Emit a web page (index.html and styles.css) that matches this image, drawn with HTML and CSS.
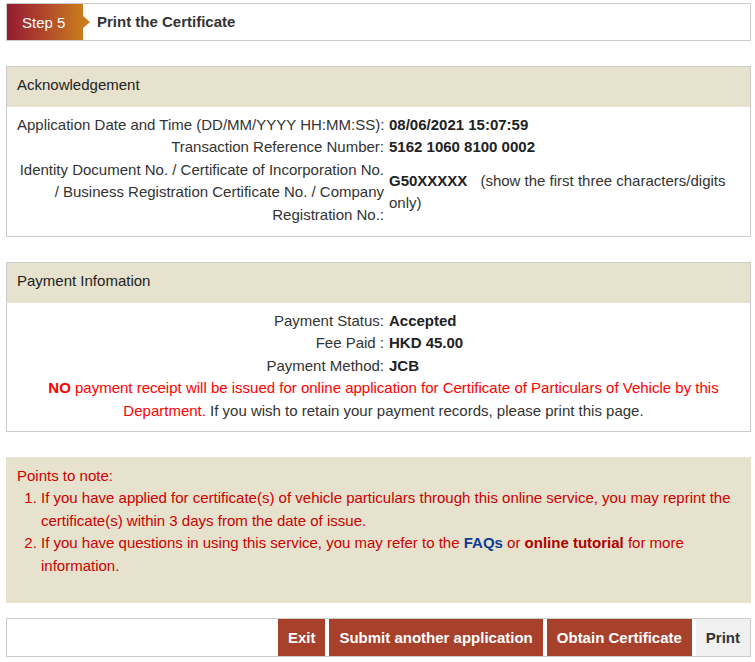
FILE: index.html
```html
<!DOCTYPE html>
<html lang="en">
<head>
<meta charset="utf-8">
<title>Print the Certificate</title>
<link rel="stylesheet" href="styles.css">
</head>
<body>
<div class="page">
  <div class="stepbar">
    <div class="step-label">Step 5</div>
    <div class="step-arrow"></div>
    <div class="step-title">Print the Certificate</div>
  </div>

  <section class="panel">
    <div class="panel-head">Acknowledgement</div>
    <div class="panel-body">
      <div class="row">
        <div class="label label-single">Application Date and Time (DD/MM/YYYY HH:MM:SS):</div>
        <div class="value"><b>08/06/2021 15:07:59</b></div>
      </div>
      <div class="row">
        <div class="label">Transaction Reference Number:</div>
        <div class="value"><b>5162 1060 8100 0002</b></div>
      </div>
      <div class="row">
        <div class="label">Identity Document No. / Certificate of Incorporation No. / Business Registration Certificate No. / Company Registration No.:</div>
        <div class="value"><b>G50XXXXX</b><span class="gap"></span>(show the first three characters/digits only)</div>
      </div>
    </div>
  </section>

  <section class="panel">
    <div class="panel-head">Payment Infomation</div>
    <div class="panel-body pay">
      <div class="row">
        <div class="label">Payment Status:</div>
        <div class="value"><b>Accepted</b></div>
      </div>
      <div class="row">
        <div class="label">Fee Paid :</div>
        <div class="value"><b>HKD 45.00</b></div>
      </div>
      <div class="row">
        <div class="label">Payment Method:</div>
        <div class="value"><b>JCB</b></div>
      </div>
      <p class="receipt"><span class="red"><b>NO</b> payment receipt will be issued for online application for Certificate of Particulars of Vehicle by this Department.</span> If you wish to retain your payment records, please print this page.</p>
    </div>
  </section>

  <section class="notes">
    <p class="notes-title">Points to note:</p>
    <ol class="notes-list">
      <li>If you have applied for certificate(s) of vehicle particulars through this online service, you may reprint the certificate(s) within 3 days from the date of issue.</li>
      <li>If you have questions in using this service, you may refer to the <a class="link-faq" href="#">FAQs</a> or <a class="link-tut" href="#">online tutorial</a> for more information.</li>
    </ol>
  </section>

  <div class="buttonbar">
    <button class="btn">Exit</button>
    <button class="btn">Submit another application</button>
    <button class="btn">Obtain Certificate</button>
    <button class="btn btn-light">Print</button>
  </div>
</div>
</body>
</html>
```

FILE: styles.css
```css
html, body {
  margin: 0;
  padding: 0;
  background: #ffffff;
}

body {
  font-family: "Liberation Sans", Arial, sans-serif;
  font-size: 15px;
  color: #333333;
}

.page {
  padding: 3px 4px 0 6px;
}

/* Step bar */
.stepbar {
  display: flex;
  align-items: center;
  border: 1px solid #cccccc;
  height: 36px;
}

.step-label {
  align-self: stretch;
  display: flex;
  align-items: center;
  padding: 0 15px;
  width: 46px;
  color: #ffffff;
  background: linear-gradient(to right, #951a31 0%, #b1482a 50%, #ca7c1d 100%);
}

.step-arrow {
  width: 0;
  height: 0;
  border-top: 6px solid transparent;
  border-bottom: 6px solid transparent;
  border-left: 7px solid #ca7c1d;
  margin-right: 7px;
}

.step-title {
  font-weight: bold;
  color: #333333;
  margin-top: -2px;
}

/* Panels */
.panel {
  margin-top: 25px;
  border: 1px solid #cccccc;
}

.panel-head {
  background: #e7e2cd;
  height: 40px;
  line-height: 36px;
  padding: 0 10px;
  color: #222222;
}

.panel-body {
  padding: 7px 0 10px 10px;
  line-height: 22.4px;
}

.panel-body.pay {
  padding-bottom: 9px;
}

.row {
  display: grid;
  grid-template-columns: 367px 1fr;
  align-items: center;
}

.label {
  text-align: right;
}

.label-single {
  white-space: nowrap;
}

.value {
  padding-left: 5px;
  padding-right: 10px;
}

.value b {
  color: #222222;
}

.gap {
  display: inline-block;
  width: 13px;
}

.receipt {
  margin: 0;
  text-align: center;
}

.red {
  color: #ff0000;
}

/* Notes */
.notes {
  margin-top: 25px;
  background: #e7e2cd;
  color: #cc0000;
  padding: 8px 10px 26px 11px;
  line-height: 22.4px;
}

.notes-title {
  margin: 0;
}

.notes-list {
  margin: 0;
  padding-left: 24px;
}

.link-faq {
  color: #0b3d91;
  font-weight: bold;
  text-decoration: none;
}

.link-tut {
  color: #b00000;
  font-weight: bold;
  text-decoration: none;
}

/* Button bar */
.buttonbar {
  margin-top: 15px;
  border: 1px solid #cccccc;
  height: 37px;
  display: flex;
  justify-content: flex-end;
  gap: 4px;
}

.btn {
  border: none;
  margin: 0;
  padding: 0 10px;
  height: 37px;
  background: #a8412b;
  color: #ffffff;
  font-family: "Liberation Sans", Arial, sans-serif;
  font-size: 15px;
  font-weight: bold;
  cursor: pointer;
}

.btn-light {
  background: #f0f0f0;
  color: #333333;
}
```
